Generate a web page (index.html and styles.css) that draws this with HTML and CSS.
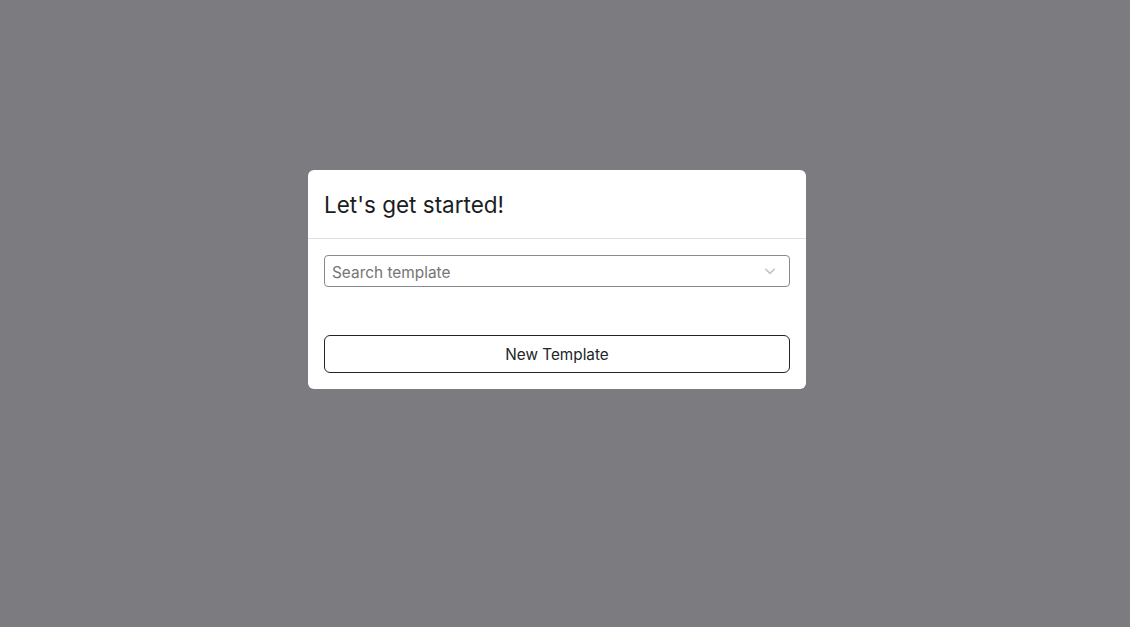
FILE: index.html
```html
<!DOCTYPE html>
<html lang="en">
<head>
    <meta charset="UTF-8">
    <meta name="viewport" content="width=device-width, initial-scale=1.0">
    <title>Let's get started</title>
    <link rel="stylesheet" href="styles.css">
</head>
<body>
    <div class="backdrop">
        <div class="modal">
            <div class="modal-header">
                <h2>Let's get started!</h2>
            </div>
            <div class="modal-body">
                <div class="select">
                    <input type="text" placeholder="Search template">
                    <span class="chevron">
                        <svg width="14" height="14" viewBox="0 0 20 20"><path d="M4 7.5 L10 13.5 L16 7.5" fill="none" stroke="#c6c6c6" stroke-width="2.4" stroke-linecap="round" stroke-linejoin="round"/></svg>
                    </span>
                </div>
                <button type="button" class="btn-new">New Template</button>
            </div>
        </div>
    </div>
</body>
</html>
```

FILE: styles.css
```css
body {
    margin: 0;
    font-family: Inter, "Noto Sans", Arial, sans-serif;
    background-color: #7c7b80;
    color: #212529;
}

.backdrop {
    height: 627px;
    display: flex;
    justify-content: center;
    padding: 170px 16px 0 0;
    box-sizing: border-box;
}

.modal {
    width: 498px;
    height: 219px;
    background-color: #fff;
    border-radius: 6px;
    box-sizing: border-box;
}

.modal-header {
    height: 69px;
    padding: 0 16px;
    display: flex;
    align-items: center;
    border-bottom: 1px solid #dee2e6;
    box-sizing: border-box;
}

.modal-header h2 {
    margin: 0;
    font-size: 22.5px;
    font-weight: 400;
    padding-top: 1px;
    color: #1a1d21;
}

.modal-body {
    padding: 16px;
}

.select {
    position: relative;
    height: 32px;
    border: 1px solid #8a8a8a;
    border-radius: 4px;
    box-sizing: border-box;
    display: flex;
    align-items: center;
}

.select input {
    flex: 1;
    border: none;
    outline: none;
    background: transparent;
    font-family: inherit;
    font-size: 15.4px;
    padding: 2px 7px 0;
    color: #212529;
}

.select input::placeholder {
    color: #757575;
}

.chevron {
    display: flex;
    padding: 0 12px 0 8px;
}

.btn-new {
    display: block;
    width: 100%;
    height: 38px;
    margin-top: 48px;
    background-color: #fff;
    border: 1px solid #212529;
    border-radius: 6px;
    font-family: inherit;
    font-size: 15.3px;
    color: #212529;
    cursor: pointer;
}
```
